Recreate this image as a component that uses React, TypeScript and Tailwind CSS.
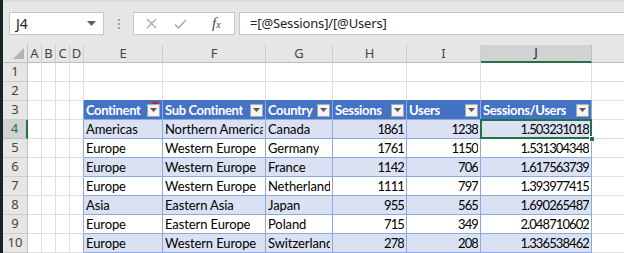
import React from 'react'

const cols = ['A', 'B', 'C', 'D', 'E', 'F', 'G', 'H', 'I', 'J', '']

const header = ['Continent', 'Sub Continent', 'Country', 'Sessions', 'Users', 'Sessions/Users']

const rows: (string | number)[][] = [
  ['Americas', 'Northern America', 'Canada', 1861, 1238, '1.503231018'],
  ['Europe', 'Western Europe', 'Germany', 1761, 1150, '1.531304348'],
  ['Europe', 'Western Europe', 'France', 1142, 706, '1.617563739'],
  ['Europe', 'Western Europe', 'Netherlands', 1111, 797, '1.393977415'],
  ['Asia', 'Eastern Asia', 'Japan', 955, 565, '1.690265487'],
  ['Europe', 'Eastern Europe', 'Poland', 715, 349, '2.048710602'],
  ['Europe', 'Western Europe', 'Switzerland', 278, 208, '1.336538462'],
]

const cellFont = { fontFamily: 'Lato, "Liberation Sans", sans-serif' }

function FilterButton({ mark = false }: { mark?: boolean }) {
  return (
    <div className="relative w-[13px] h-[13px] shrink-0 bg-[#f4f4f4] border border-[#a9a9a9] flex items-center justify-center">
      <svg width="7" height="4" viewBox="0 0 7 4">
        <path d="M0 0h7L3.5 4z" fill="#595959" />
      </svg>
      {mark ? <div className="absolute -top-[3px] right-[1px] w-[6px] h-[2px] bg-[#e81123]" /> : null}
    </div>
  )
}

function PlainCell({ last = false, blueRight = false, blueBottom = false }: { last?: boolean; blueRight?: boolean; blueBottom?: boolean }) {
  return (
    <div
      className={
        'bg-white border-b ' +
        (blueBottom ? 'border-b-[#4472c4] ' : 'border-b-[#dedede] ') +
        (last ? '' : blueRight ? 'border-r border-r-[#8ea9db]' : 'border-r border-r-[#dedede]')
      }
    />
  )
}

export default function App() {
  return (
    <div className="w-[624px] h-[253px] overflow-hidden flex bg-white" style={{ fontFamily: '"Noto Sans", "Open Sans", sans-serif' }}>
      <div className="w-[3px] shrink-0 bg-[#18242c]" />
      <div className="flex-1 min-w-0 flex flex-col">
        {/* formula bar */}
        <div className="h-[45px] shrink-0 bg-[#e6e6e6] border-t-[2px] border-t-[#dadada]">
          <div className="flex items-start pt-[10px]">
            <div className="ml-[6px] w-[95px] h-[23px] bg-white border border-[#c6c6c6] flex items-center justify-between pl-[6px] pr-[7px]">
              <span className="text-[14px] text-[#222] leading-none">J4</span>
              <svg width="9" height="5" viewBox="0 0 9 5">
                <path d="M0 0h9L4.5 5z" fill="#5f5f5f" />
              </svg>
            </div>
            <div className="w-[29px] h-[23px] flex flex-col items-center justify-center gap-[2px]">
              <div className="w-[2px] h-[2px] bg-[#a0a0a0]" />
              <div className="w-[2px] h-[2px] bg-[#a0a0a0]" />
              <div className="w-[2px] h-[2px] bg-[#a0a0a0]" />
            </div>
            <div className="w-[102px] h-[23px] bg-white border border-[#c6c6c6] flex items-center">
              <svg className="ml-[12px]" width="11" height="11" viewBox="0 0 11 11">
                <path d="M1 1l9 9M10 1l-9 9" stroke="#a8a8a8" strokeWidth="1.3" />
              </svg>
              <svg className="ml-[17px]" width="13" height="10" viewBox="0 0 13 10">
                <path d="M1 5.5l3.5 3.5L12 1" stroke="#a8a8a8" strokeWidth="1.4" fill="none" />
              </svg>
              <span
                className="ml-[25px] text-[15px] italic text-[#444] leading-none"
                style={{ fontFamily: '"Liberation Serif", serif' }}
              >
                f<span className="text-[10px]">x</span>
              </span>
            </div>
            <div className="ml-[4px] flex-1 h-[23px] bg-white border-y border-l border-[#c6c6c6] flex items-center pl-[10px]">
              <span className="text-[13px] tracking-[-0.15px] text-[#222] leading-none">=[@Sessions]/[@Users]</span>
            </div>
          </div>
        </div>

        {/* sheet */}
        <div className="grid grid-cols-[25px_14px_14px_14px_14px_79px_103px_67px_74px_74px_111px_1fr] grid-rows-[18px_repeat(10,19px)]">
          {/* column headers */}
          <div className="bg-[#e6e6e6] border-r border-b border-[#bdbdbd] flex items-end justify-end pr-[3px] pb-[3px]">
            <svg width="11" height="11" viewBox="0 0 11 11">
              <path d="M11 0v11H0z" fill="#b4b4b4" />
            </svg>
          </div>
          {cols.map((c, i) =>
            c === 'J' ? (
              <div
                key={i}
                className="bg-[#d2d2d2] border-r border-r-[#bdbdbd] border-b-2 border-b-[#217346] flex items-center justify-center text-[13px] text-[#262626]"
              >
                {c}
              </div>
            ) : (
              <div
                key={i}
                className={
                  'bg-[#e6e6e6] border-b border-b-[#bdbdbd] flex items-center justify-center text-[13px] text-[#444] ' +
                  (c === '' ? '' : 'border-r border-r-[#cdcdcd]')
                }
              >
                {c}
              </div>
            )
          )}

          {Array.from({ length: 10 }).map((_, r) => {
            const rowNum = r + 1
            const cells: React.ReactNode[] = []
            cells.push(
              rowNum === 4 ? (
                <div
                  key="h"
                  className="bg-[#d2d2d2] border-b border-b-[#bdbdbd] border-r-2 border-r-[#217346] flex items-center justify-center text-[13px] text-[#217346]"
                >
                  {rowNum}
                </div>
              ) : (
                <div
                  key="h"
                  className="bg-[#e6e6e6] border-b border-b-[#cdcdcd] border-r border-r-[#bdbdbd] flex items-center justify-center text-[13px] text-[#444]"
                >
                  {rowNum}
                </div>
              )
            )
            // A-D
            for (let c = 0; c < 4; c++) {
              cells.push(<PlainCell key={'p' + c} blueRight={c === 3 && rowNum >= 3} />)
            }
            if (rowNum < 3) {
              for (let c = 0; c < 6; c++) {
                cells.push(<PlainCell key={'e' + c} blueBottom={rowNum === 2} />)
              }
            } else if (rowNum === 3) {
              header.forEach((h, c) => {
                cells.push(
                  <div
                    key={'t' + c}
                    className="bg-[#4472c4] border-r border-r-[#8ea9db] border-b border-b-[#8ea9db] flex items-center justify-between gap-[1px] pl-[2px] pr-[2px]"
                  >
                    <span
                      className="min-w-0 text-white font-bold text-[13px] tracking-[-0.35px] whitespace-nowrap overflow-hidden leading-none"
                      style={cellFont}
                    >
                      {h}
                    </span>
                    <FilterButton mark={c === 0} />
                  </div>
                )
              })
            } else {
              const data = rows[rowNum - 4]
              const band = rowNum % 2 === 0
              data.forEach((v, c) => {
                const numeric = c >= 3
                const selected = rowNum === 4 && c === 5
                cells.push(
                  <div
                    key={'d' + c}
                    className={
                      'relative border-r border-r-[#8ea9db] border-b border-b-[#8ea9db] flex items-center px-[2px] ' +
                      (band ? 'bg-[#d9e1f2] ' : 'bg-white ') +
                      (numeric ? 'justify-end ' : 'justify-start ') +
                      (selected ? 'z-10' : '')
                    }
                  >
                    <span
                      className={
                        'min-w-0 text-[13px] text-black whitespace-nowrap overflow-hidden leading-[16px] ' +
                        (numeric ? 'tracking-[-0.9px]' : 'tracking-[-0.1px]')
                      }
                      style={cellFont}
                    >
                      {v}
                    </span>
                    {selected ? (
                      <>
                        <div className="absolute -left-[1px] -top-[1px] -right-[1px] -bottom-[1px] border-2 border-[#217346]" />
                        <div className="absolute -right-[4px] -bottom-[4px] w-[6px] h-[6px] bg-[#217346] border border-white" />
                      </>
                    ) : null}
                  </div>
                )
              })
            }
            cells.push(<PlainCell key="k" last />)
            return <React.Fragment key={r}>{cells}</React.Fragment>
          })}
        </div>
      </div>
    </div>
  )
}
